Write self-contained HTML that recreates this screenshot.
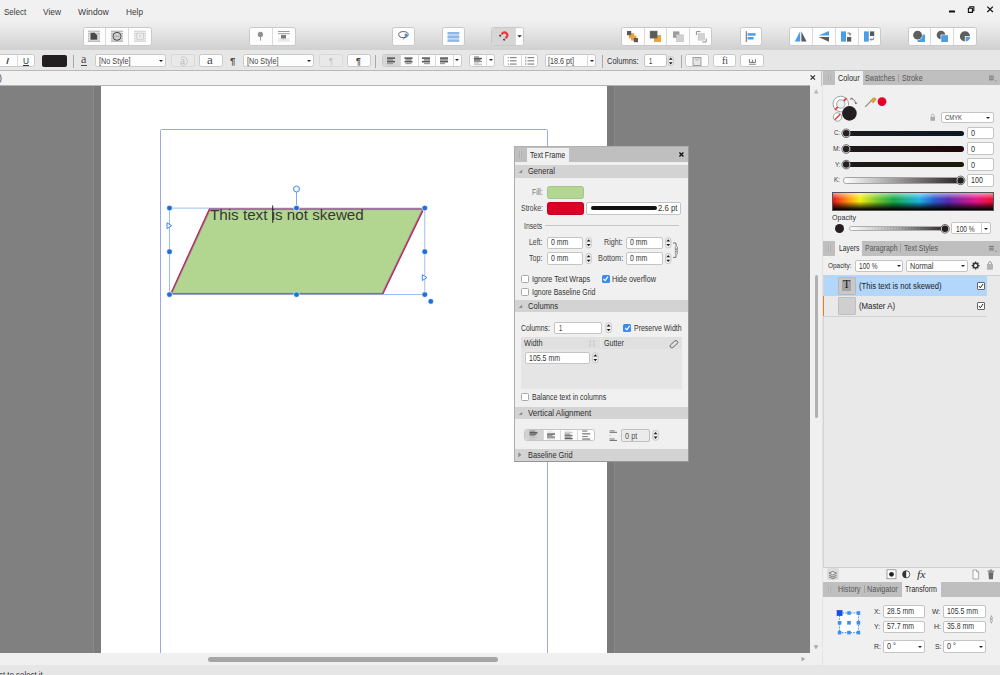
<!DOCTYPE html>
<html><head><meta charset="utf-8">
<style>
*{box-sizing:border-box;margin:0;padding:0}
html,body{width:1000px;height:675px;overflow:hidden;background:#f0f0f0;font-family:"Liberation Sans",sans-serif;font-size:8.5px;color:#3a3a3a}
.a{position:absolute}
.t{position:absolute;white-space:nowrap;line-height:10px;transform-origin:0 0}
.b{position:absolute;background:#fdfdfd;border:1px solid #c9c9c9;border-radius:2.5px}
.b i{position:absolute;top:0;bottom:0;width:1px;background:#dadada}
.p{position:absolute;top:0;bottom:0;background:#d6d6d6}
.i{position:absolute;background:#fff;border:1px solid #c4c4c4;border-radius:2px}
.sp{position:absolute;width:6.4px;background:#f3f3f3;border:1px solid #c8c8c8;border-radius:2.5px}
.sp:before{content:"";position:absolute;left:0.3px;top:1.5px;border:1.9px solid transparent;border-bottom:2.3px solid #1a1a1a;border-top:0}
.sp:after{content:"";position:absolute;left:0.3px;bottom:1.2px;border:1.9px solid transparent;border-top:2.3px solid #1a1a1a;border-bottom:0}
.dd{position:absolute;width:0;height:0;border:2px solid transparent;border-top:2.5px solid #222;border-bottom:0}
.cb{position:absolute;width:8px;height:8px;background:#fff;border:1px solid #a8a8a8;border-radius:1.5px}
.cc{position:absolute;width:8px;height:8px;background:#3b8bef;border-radius:1.5px}
svg{position:absolute;overflow:visible}
</style></head><body>
<div class="a" style="left:0px;top:0px;width:1000px;height:21px;background:#f1f1f1;"></div>
<div class="a" style="left:0px;top:21px;width:1000px;height:28.6px;background:linear-gradient(#f0f0f0,#e4e4e4 40%,#d0d0d0);"></div>
<div class="a" style="left:0px;top:49.6px;width:1000px;height:20.4px;background:#e7e7e7;"></div>
<div class="a" style="left:0px;top:70px;width:1000px;height:1px;background:#b9b9b9;"></div>
<div class="a" style="left:0px;top:71px;width:822px;height:14.5px;background:#f2f2f2;border-right:1px solid #c4c4c4"></div>
<div class="a" style="left:0px;top:85px;width:810px;height:568px;background:#808080;border-top:1px solid #b4b4b4"></div>
<div class="a" style="left:93px;top:86px;width:1px;height:567px;background:#8a8a8a;"></div>
<div class="a" style="left:94px;top:86px;width:7px;height:567px;background:#7b7b7b;"></div>
<div class="a" style="left:607px;top:86px;width:7px;height:567px;background:#7a7a7a;"></div>
<div class="a" style="left:614px;top:86px;width:1px;height:567px;background:#8a8a8a;"></div>
<div class="a" style="left:100.6px;top:86px;width:506.6px;height:567px;background:#fff;"></div>
<div class="a" style="left:160px;top:129px;width:388px;height:540px;border:1px solid #9ca4f4;border-radius:1.5px 1.5px 0 0"></div>
<div class="a" style="left:810px;top:85.5px;width:12px;height:568px;background:#f0f0f0;"></div>
<div class="a" style="left:0px;top:653px;width:822px;height:12px;background:#f0f0f0;"></div>
<div class="a" style="left:208px;top:656.5px;width:290px;height:5px;background:#a6a6a6;border-radius:3px"></div>
<div class="a" style="left:814.5px;top:275px;width:3.5px;height:143px;background:#b0b0b0;border-radius:2px"></div>
<svg style="left:0;top:0" width="1000" height="675"><path d="M813.8 93.5h4.8l-2.4-4.2z" fill="#b8b8b8"/><path d="M813.6 645.3h4.8l-2.4 4.2z" fill="#a8a8a8"/><path d="M801.5 656.8v4.6l3.8-2.3z" fill="#a8a8a8"/></svg>
<div class="a" style="left:0px;top:665px;width:1000px;height:10px;background:#e6e6e6;"></div>
<div class="t" style="left:-1px;top:670.00px;font-size:8.8px;color:#333;transform:scaleX(0.896);">ct to select it.</div>
<div class="t" style="left:3.5px;top:6.96px;font-size:9.2px;color:#3a3a3a;transform:scaleX(0.872);">Select</div>
<div class="t" style="left:42.8px;top:6.96px;font-size:9.2px;color:#3a3a3a;transform:scaleX(0.910);">View</div>
<div class="t" style="left:77.5px;top:6.96px;font-size:9.2px;color:#3a3a3a;transform:scaleX(0.941);">Window</div>
<div class="t" style="left:125.5px;top:6.96px;font-size:9.2px;color:#3a3a3a;transform:scaleX(0.899);">Help</div>
<svg style="left:0;top:0" width="1000" height="22"><rect x="949" y="10.5" width="6" height="2" fill="#111"/><path d="M969.8 8v-1.3h4v4h-1.3M968.4 8.2h4v4.2h-4z" fill="none" stroke="#111" stroke-width="1.1"/><path d="M987.3 6.6l5.6 5.4M992.9 6.6l-5.6 5.4" stroke="#111" stroke-width="1.2"/></svg>
<div class="b" style="left:82.8px;top:27.3px;width:68.8px;height:18.3px"><i style="left:21.60000000000001px"></i><i style="left:44.60000000000001px"></i></div>
<div class="b" style="left:249.4px;top:27.3px;width:46.20000000000002px;height:18.3px"><i style="left:21.99999999999997px"></i></div>
<div class="b" style="left:392.4px;top:27.3px;width:22.80000000000001px;height:18.3px"></div>
<div class="b" style="left:442px;top:27.3px;width:23px;height:18.3px"></div>
<div class="b" style="left:491.2px;top:27.3px;width:33.00000000000006px;height:18.3px"><div class="p" style="left:0;width:22.599999999999966px;border-radius:2px 0 0 2px"></div><i style="left:22.599999999999966px"></i></div>
<div class="b" style="left:620.8px;top:27.3px;width:91.70000000000005px;height:18.3px"><i style="left:21.90000000000009px"></i><i style="left:44.700000000000045px"></i><i style="left:67.70000000000005px"></i></div>
<div class="b" style="left:739.5px;top:27.3px;width:22.899999999999977px;height:18.3px"></div>
<div class="b" style="left:789.4px;top:27.3px;width:91.80000000000007px;height:18.3px"><i style="left:22.100000000000023px"></i><i style="left:45.0px"></i><i style="left:68.0px"></i></div>
<div class="b" style="left:907.8px;top:27.3px;width:69.0px;height:18.3px"><i style="left:21.700000000000045px"></i><i style="left:44.700000000000045px"></i></div>
<svg style="left:0;top:0" width="1000" height="50"><rect x="88" y="30.6" width="12" height="1.8" fill="#bdbdbd"/><rect x="88" y="33.0" width="12" height="1.8" fill="#bdbdbd"/><rect x="88" y="35.4" width="12" height="1.8" fill="#bdbdbd"/><rect x="88" y="37.8" width="12" height="1.8" fill="#bdbdbd"/><rect x="88" y="40.2" width="12" height="1.8" fill="#bdbdbd"/><path d="M90 32.2h4.6l3.2 3v5h-7.8z" fill="#484848" stroke="#f0f0f0" stroke-width=".9"/><rect x="111" y="30.6" width="12" height="1.8" fill="#bdbdbd"/><rect x="111" y="33.0" width="12" height="1.8" fill="#bdbdbd"/><rect x="111" y="35.4" width="12" height="1.8" fill="#bdbdbd"/><rect x="111" y="37.8" width="12" height="1.8" fill="#bdbdbd"/><rect x="111" y="40.2" width="12" height="1.8" fill="#bdbdbd"/><circle cx="117" cy="36.3" r="4" fill="#d0d0d0" stroke="#4a4a4a" stroke-width="1"/><rect x="113.6" y="35.6" width="6.8" height="1.4" fill="#b4b4b4"/><rect x="134" y="30.6" width="12" height="1.8" fill="#dcdcdc"/><rect x="134" y="33.0" width="12" height="1.8" fill="#dcdcdc"/><rect x="134" y="35.4" width="12" height="1.8" fill="#dcdcdc"/><rect x="134" y="37.8" width="12" height="1.8" fill="#dcdcdc"/><rect x="134" y="40.2" width="12" height="1.8" fill="#dcdcdc"/><rect x="137" y="33.2" width="6.4" height="6" fill="#f4f4f4" stroke="#c2c2c2" stroke-width=".7"/><path d="M138.8 34.8l2.8 2.8M141.6 34.8l-2.8 2.8" stroke="#bbb" stroke-width=".7"/><circle cx="260.4" cy="34.4" r="2.6" fill="#909090"/><rect x="260" y="36" width=".9" height="4.6" fill="#909090"/><rect x="278" y="31" width="11.6" height="1" fill="#9a9a9a"/><rect x="278" y="33.2" width="11.6" height="1" fill="#9a9a9a"/><rect x="281" y="35" width="5" height="4.2" fill="#7a7a7a"/><rect x="278" y="38.4" width="11.6" height="1" fill="#dcdcdc"/><rect x="278" y="40.4" width="11.6" height="1" fill="#dcdcdc"/><ellipse cx="403.4" cy="34.6" rx="4.7" ry="3" fill="#fff" stroke="#4a4a4a" stroke-width=".9"/><path d="M405.6 36.2l-2.4 3.2" stroke="#4a4a4a" stroke-width=".8"/><circle cx="406" cy="35" r="1.5" fill="#3d8fe8"/><rect x="447.6" y="32" width="11.6" height="9.8" fill="#c6dbf3"/><rect x="447.6" y="32" width="11.6" height="2.2" fill="#8fb7e6"/><rect x="447.6" y="35.8" width="11.6" height="2.2" fill="#8fb7e6"/><rect x="447.6" y="39.6" width="11.6" height="2.2" fill="#8fb7e6"/><g transform="translate(504.5,35.3) rotate(45)"><path d="M-2.8 1.5V0A2.8 2.8 0 0 1 2.8 0V1.5" fill="none" stroke="#f03238" stroke-width="2"/><rect x="-3.7" y="2.5" width="1.8" height="1.7" fill="#3a3a3a"/><rect x="1.9" y="2.5" width="1.8" height="1.7" fill="#3a3a3a"/></g><path d="M517.4 35.2h4.4l-2.2 2.4z" fill="#222"/><rect x="628.8" y="33.2" width="5.4" height="5.2" fill="#e8a33a"/><rect x="631" y="35.6" width="5.4" height="5" fill="#e8a33a"/><rect x="627" y="31" width="4.2" height="4.2" fill="#5a5a5a"/><rect x="633.8" y="38" width="4.2" height="4.2" fill="#5a5a5a"/><rect x="654" y="35" width="7" height="7" fill="#e8a33a"/><rect x="650" y="31" width="7.2" height="7.2" fill="#5a5a5a" stroke="#888" stroke-width=".5"/><rect x="673" y="31.4" width="6.4" height="6.4" fill="#9c9c9c"/><rect x="676.4" y="34.8" width="7.2" height="7" fill="#d0d0d0" stroke="#c0c0c0" stroke-width=".5"/><rect x="698" y="33.4" width="6.6" height="6.8" fill="#d2d2d2" stroke="#c4c4c4" stroke-width=".5"/><path d="M696.4 35v-3.4h4M706.2 38.6v3.4h-3.8" fill="none" stroke="#8e8e8e" stroke-width="1"/><rect x="745.8" y="31.2" width=".9" height="10.8" fill="#555"/><rect x="747.6" y="33.2" width="8" height="2.5" fill="#4a9ee6"/><rect x="747.6" y="37" width="6" height="2.5" fill="#4a9ee6"/><path d="M794.8 41.6h5.4v-10.4z" fill="#4a9ee6"/><path d="M801.4 41.6h5.2l-5.2-10.2z" fill="#5a5a5a"/><path d="M818.4 35.6h10.6v-4.6z" fill="#4a9ee6"/><path d="M818.4 36.9h10.6v4.8z" fill="#5a5a5a"/><rect x="841" y="31.4" width="5" height="10.2" fill="#4a9ee6"/><rect x="847" y="37" width="4.2" height="4.6" fill="#5a5a5a"/><path d="M847.4 33h2.6v2.6M850 34.6l-1-1.2M850 34.6l1-1.2" fill="none" stroke="#555" stroke-width=".7"/><rect x="864" y="31.4" width="4.8" height="10.2" fill="#4a9ee6"/><rect x="870" y="31.4" width="4.2" height="4.6" fill="#5a5a5a"/><path d="M873.4 37.4v2.2h-3.2M871.2 38.6l-1 1l1 1" fill="none" stroke="#555" stroke-width=".7"/><rect x="917.6" y="34.6" width="7.4" height="7.4" fill="#4a9ee6"/><circle cx="917.6" cy="35.2" r="4.9" fill="#fff"/><circle cx="917.6" cy="35.2" r="4.4" fill="#5e5e5e"/><circle cx="941" cy="35" r="4.3" fill="#5e5e5e"/><rect x="940.6" y="34.6" width="7.8" height="7.8" fill="#fff"/><rect x="941.2" y="35.2" width="6.8" height="6.8" fill="#4a9ee6"/><circle cx="965" cy="36.4" r="5.1" fill="#5e5e5e"/><path d="M964.8 36.2h6v6h-6z" fill="#fff"/><path d="M965.6 37h4.6a5.1 5.1 0 0 1-4.6 4.4z" fill="#4a9ee6"/></svg>
<div class="b" style="left:-6px;top:54px;width:41.3px;height:13.2px;background:#fdfdfd;border-color:#c9c9c9"><i style="left:22px"></i></div>
<div class="t" style="left:6.4px;top:55.55px;font-size:9.5px;color:#222;transform:scaleX(1.137);font-style:italic;">I</div>
<div class="t" style="left:23px;top:55.73px;font-size:9px;color:#333;transform:scaleX(0.923);text-decoration:underline;">U</div>
<div class="a" style="left:42px;top:55px;width:24.8px;height:11.8px;background:#231f20;border-radius:2px"></div>
<div class="a" style="left:73px;top:55px;width:1px;height:12.5px;background:#a8a8a8;"></div>
<div class="t" style="left:81px;top:54.27px;font-size:12px;color:#4a4a4a;transform:scaleX(1.014);font-family:'Liberation Serif',serif;">a</div>
<div class="a" style="left:80.5px;top:65.2px;width:6.5px;height:1px;background:#4a4a4a;"></div>
<div class="b" style="left:94.5px;top:54px;width:71.5px;height:13.2px;background:#fdfdfd;border-color:#c9c9c9"></div>
<div class="t" style="left:98.5px;top:55.97px;font-size:8.3px;color:#444;transform:scaleX(0.876);">[No Style]</div>
<div class="dd" style="left:159px;top:59.8px"></div>
<div class="b" style="left:170.5px;top:54px;width:24.30000000000001px;height:13.2px;background:#e9e9e9;border-color:#d9d9d9"></div>
<div class="t" style="left:180.3px;top:55.60px;font-size:10.5px;color:#bebebe;transform:scaleX(1.073);font-family:'Liberation Serif',serif;">a</div>
<svg style="left:0;top:0" width="400" height="72"><path d="M180.8 57.5a4.3 4.3 0 1 1 -0.6 6.6" fill="none" stroke="#c2c2c2" stroke-width=".8"/><path d="M329 57.5a4.3 4.3 0 1 1 -0.6 6.6" fill="none" stroke="#c2c2c2" stroke-width=".8"/></svg>
<div class="b" style="left:198.5px;top:54px;width:24.0px;height:13.2px;background:#fdfdfd;border-color:#c9c9c9"></div>
<div class="t" style="left:207.4px;top:54.52px;font-size:13px;color:#4a4a4a;transform:scaleX(1.005);font-family:'Liberation Serif',serif;">a</div>
<div class="t" style="left:229.8px;top:55.84px;font-size:9.8px;color:#4a4a4a;transform:scaleX(0.988);font-weight:bold;">¶</div>
<div class="b" style="left:242.5px;top:54px;width:71.30000000000001px;height:13.2px;background:#fdfdfd;border-color:#c9c9c9"></div>
<div class="t" style="left:246.5px;top:55.97px;font-size:8.3px;color:#444;transform:scaleX(0.876);">[No Style]</div>
<div class="dd" style="left:307.3px;top:59.8px"></div>
<div class="b" style="left:318.5px;top:54px;width:24.69999999999999px;height:13.2px;background:#e9e9e9;border-color:#d9d9d9"></div>
<div class="t" style="left:328.6px;top:56.20px;font-size:8.8px;color:#bcbcbc;transform:scaleX(0.846);">¶</div>
<div class="b" style="left:346.5px;top:54px;width:24.0px;height:13.2px;background:#fdfdfd;border-color:#c9c9c9"></div>
<div class="t" style="left:356.2px;top:56.05px;font-size:9.2px;color:#3a3a3a;transform:scaleX(0.931);font-weight:bold;">¶</div>
<div class="a" style="left:375.2px;top:55px;width:1px;height:12.5px;background:#a8a8a8;"></div>
<div class="b" style="left:381.5px;top:54px;width:80.0px;height:13.2px;background:#fdfdfd;border-color:#c9c9c9"><div class="p" style="left:0;width:17.0px;border-radius:2px 0 0 2px"></div><i style="left:17.0px"></i><i style="left:35.0px"></i><i style="left:52.0px"></i><i style="left:70.0px"></i></div>
<div class="dd" style="left:455.3px;top:59.3px"></div>
<div class="b" style="left:468.8px;top:54px;width:26.399999999999977px;height:13.2px;background:#fdfdfd;border-color:#c9c9c9"><i style="left:16.69999999999999px"></i></div>
<div class="dd" style="left:489.3px;top:59.3px"></div>
<div class="b" style="left:503px;top:54px;width:35.200000000000045px;height:13.2px;background:#fdfdfd;border-color:#c9c9c9"><i style="left:16.5px"></i></div>
<div class="b" style="left:544.6px;top:54px;width:51.69999999999993px;height:13.2px;background:#fdfdfd;border-color:#c9c9c9"><i style="left:41.39999999999998px"></i></div>
<div class="t" style="left:548px;top:55.97px;font-size:8.3px;color:#444;transform:scaleX(0.867);">[18.6 pt]</div>
<div class="dd" style="left:589.8px;top:59.8px"></div>
<div class="a" style="left:602.3px;top:55px;width:1px;height:12.5px;background:#a8a8a8;"></div>
<div class="t" style="left:607px;top:55.80px;font-size:8.8px;color:#333;transform:scaleX(0.853);">Columns:</div>
<div class="i" style="left:644.3px;top:54px;width:22.5px;height:13.2px"></div>
<div class="t" style="left:649px;top:55.90px;font-size:8.5px;color:#333;transform:scaleX(0.677);">1</div>
<svg style="left:0;top:0" width="1000" height="675"><rect x="668.10" y="56.50" width="5.30" height="9.00" rx="2.2" fill="#f3f3f3" stroke="#c6c6c6" stroke-width="1"/><path d="M668.85 59.80h3.8l-1.9-2.3z" fill="#1a1a1a"/><path d="M668.85 62.20h3.8l-1.9 2.3z" fill="#1a1a1a"/></svg>
<div class="a" style="left:680.5px;top:55px;width:1px;height:12.5px;background:#a8a8a8;"></div>
<div class="b" style="left:685px;top:54px;width:24.200000000000045px;height:13.2px;background:#fdfdfd;border-color:#c9c9c9"></div>
<div class="b" style="left:712.7px;top:54px;width:23.799999999999955px;height:13.2px;background:#fdfdfd;border-color:#c9c9c9"></div>
<div class="t" style="left:721.8px;top:55.60px;font-size:10.5px;color:#444;transform:scaleX(0.936);font-family:'Liberation Serif',serif;">fi</div>
<div class="b" style="left:740.3px;top:54px;width:24.200000000000045px;height:13.2px;background:#fdfdfd;border-color:#c9c9c9"></div>
<svg style="left:0;top:0" width="1000" height="72"><rect x="387.0" y="57.30" width="8" height="1.65" fill="#5c5c5c"/><rect x="387.0" y="59.05" width="6" height="1.65" fill="#9a9a9a"/><rect x="387.0" y="60.80" width="8" height="1.65" fill="#5c5c5c"/><rect x="387.0" y="62.55" width="6" height="1.65" fill="#9a9a9a"/><rect x="404.5" y="57.30" width="8" height="1.65" fill="#5c5c5c"/><rect x="405.5" y="59.05" width="6" height="1.65" fill="#9a9a9a"/><rect x="404.5" y="60.80" width="8" height="1.65" fill="#5c5c5c"/><rect x="405.5" y="62.55" width="6" height="1.65" fill="#9a9a9a"/><rect x="422.0" y="57.30" width="8" height="1.65" fill="#5c5c5c"/><rect x="424.0" y="59.05" width="6" height="1.65" fill="#9a9a9a"/><rect x="422.0" y="60.80" width="8" height="1.65" fill="#5c5c5c"/><rect x="424.0" y="62.55" width="6" height="1.65" fill="#9a9a9a"/><rect x="440.0" y="57.30" width="8" height="1.65" fill="#5c5c5c"/><rect x="440.0" y="59.05" width="8" height="1.65" fill="#9a9a9a"/><rect x="440.0" y="60.80" width="8" height="1.65" fill="#5c5c5c"/><rect x="440.0" y="62.55" width="5" height="1.65" fill="#9a9a9a"/><rect x="474.0" y="56.30" width="5" height="1.40" fill="#9a9a9a"/><rect x="474.0" y="57.80" width="8" height="1.40" fill="#5c5c5c"/><rect x="474.0" y="59.30" width="6.5" height="1.40" fill="#5c5c5c"/><rect x="474.0" y="60.80" width="8" height="1.40" fill="#9a9a9a"/><rect x="474.0" y="62.30" width="5" height="1.40" fill="#c8c8c8"/><rect x="474.0" y="63.80" width="8" height="1.40" fill="#c8c8c8"/><rect x="510" y="57.2" width="6.6" height="0.9" fill="#666"/><rect x="507.8" y="57.1" width="1.1" height="1.1" fill="#888"/><rect x="527.6" y="57.2" width="6.6" height="0.9" fill="#666"/><rect x="525.4" y="56.400000000000006" width=".8" height="2.2" fill="#888"/><rect x="510" y="60.4" width="6.6" height="0.9" fill="#666"/><rect x="507.8" y="60.3" width="1.1" height="1.1" fill="#888"/><rect x="527.6" y="60.4" width="6.6" height="0.9" fill="#666"/><rect x="525.4" y="59.6" width=".8" height="2.2" fill="#888"/><rect x="510" y="63.6" width="6.6" height="0.9" fill="#666"/><rect x="507.8" y="63.5" width="1.1" height="1.1" fill="#888"/><rect x="527.6" y="63.6" width="6.6" height="0.9" fill="#666"/><rect x="525.4" y="62.800000000000004" width=".8" height="2.2" fill="#888"/><rect x="693" y="57.4" width="8" height="8" fill="#e4e4e4" stroke="#8a8a8a" stroke-width=".8"/><path d="M696 58v2h2.4v-2" fill="none" stroke="#aaa" stroke-width=".6"/><path d="M749.4 59.2v3.2h6v-3.2M752.4 59.8v2.6" fill="none" stroke="#666" stroke-width=".9"/><rect x="749" y="63.8" width="6.8" height=".8" fill="#666"/></svg>
<div class="t" style="left:-1.5px;top:72.50px;font-size:8.5px;color:#444;transform:scaleX(1.060);">)</div>
<svg style="left:0;top:0" width="1000" height="90"><path d="M810.6 75.4l4.4 4.2M815 75.4l-4.4 4.2" stroke="#222" stroke-width="1.1"/></svg>
<div class="a" style="left:822px;top:71px;width:178px;height:594px;background:#f0f0f0;"></div>
<div class="a" style="left:822px;top:71px;width:1px;height:594px;background:#e4e4e4;"></div>
<div class="a" style="left:823.2px;top:70.6px;width:177px;height:14.8px;background:#bfbfbf;"></div>
<div class="a" style="left:827.6px;top:74.8px;width:3px;height:6.5px;background:repeating-linear-gradient(90deg,#b0b0b0 0 1px,#c8c8c8 1px 2px)"></div>
<div class="a" style="left:835px;top:71.4px;width:28px;height:14.2px;background:#f0f0f0;"></div>
<div class="t" style="left:838.2px;top:72.80px;font-size:8.8px;color:#2a2a2a;transform:scaleX(0.833);">Colour</div>
<div class="t" style="left:865.4px;top:72.80px;font-size:8.8px;color:#555;transform:scaleX(0.786);">Swatches</div>
<div class="a" style="left:898.4px;top:74px;width:1px;height:8px;background:#a2a2a2;"></div>
<div class="t" style="left:902px;top:72.80px;font-size:8.8px;color:#555;transform:scaleX(0.810);">Stroke</div>
<svg style="left:0;top:0" width="1000" height="675"><path d="M989 76.2h4.8M989 78h4.8M989 79.8h4.8" stroke="#6e6e6e" stroke-width=".9"/><path d="M995 80.6h2l-1 1.2z" fill="#777"/><path d="M988.6 245.6h5.6M988.6 247.6h5.6M988.6 249.6h5.6" stroke="#777" stroke-width="1"/><path d="M995.2 250.4h2.4l-1.2 1.4z" fill="#777"/></svg>
<svg style="left:0;top:0" width="1000" height="675"><circle cx="840.8" cy="104" r="7.8" fill="#fff" stroke="#8c8c8c" stroke-width=".8"/><path d="M835 109.8l11.6-11.6" stroke="#f23a3a" stroke-width="1.9"/><circle cx="840.8" cy="104" r="4.2" fill="#f0f0f0" stroke="#8c8c8c" stroke-width=".8"/><circle cx="837.5" cy="117" r="4.2" fill="#fff" stroke="#8c8c8c" stroke-width=".8"/><path d="M834.8 119.7l5.4-5.4" stroke="#f23a3a" stroke-width="1.5"/><circle cx="849.4" cy="113.4" r="7.8" fill="#f0f0f0"/><circle cx="849.4" cy="113.4" r="7.3" fill="#231f20"/><path d="M851.4 98.6a6 6 0 0 1 4.6 5" fill="none" stroke="#555" stroke-width=".7"/><path d="M850.6 99.8l.4-1.8l1.8.6M854.8 102.6l1.2 1.4l1-1.6" fill="none" stroke="#555" stroke-width=".7"/><path d="M865.2 106.8l6-6" stroke="#8a8a8a" stroke-width="1.2"/><path d="M870.6 100.6l2.2-2.4a1.8 1.8 0 0 1 2.6 2.6l-2.4 2.2z" fill="#d9a441" stroke="#a87820" stroke-width=".4"/><circle cx="882" cy="101.6" r="4.4" fill="#e4002b"/><rect x="930.4" y="116.8" width="4.6" height="4" fill="#aaa"/><path d="M931.4 116.8v-1.4a1.3 1.3 0 0 1 2.6 0v1.4" fill="none" stroke="#aaa" stroke-width=".8"/></svg>
<div class="i" style="left:941.2px;top:112.4px;width:52.4px;height:10.6px"></div>
<div class="t" style="left:944.6px;top:112.88px;font-size:8px;color:#444;transform:scaleX(0.735);">CMYK</div>
<div class="dd" style="left:986.3px;top:116.6px"></div>
<div class="t" style="left:834.2px;top:128.38px;font-size:8px;color:#3a3a3a;transform:scaleX(0.750);">C:</div>
<div class="a" style="left:843px;top:130.70000000000002px;width:121px;height:5.2px;border-radius:3.2px;background:linear-gradient(90deg,#1c1a1c,#0a1626);"></div>
<svg style="left:0;top:0" width="1000" height="675"><circle cx="846.2" cy="133.3" r="4.3" fill="#f2f2f2" stroke="#3c3c3c" stroke-width=".75"/><circle cx="846.2" cy="133.3" r="3.25" fill="#231f20"/></svg>
<div class="i" style="left:967.3px;top:126.7px;width:26.3px;height:12.8px"></div>
<div class="t" style="left:971.4px;top:128.27px;font-size:8.3px;color:#333;transform:scaleX(0.860);">0</div>
<div class="t" style="left:832.8000000000001px;top:144.08px;font-size:8px;color:#3a3a3a;transform:scaleX(0.833);">M:</div>
<div class="a" style="left:843px;top:146.4px;width:121px;height:5.2px;border-radius:3.2px;background:linear-gradient(90deg,#1c1a1c,#1f0409);"></div>
<svg style="left:0;top:0" width="1000" height="675"><circle cx="846.2" cy="149" r="4.3" fill="#f2f2f2" stroke="#3c3c3c" stroke-width=".75"/><circle cx="846.2" cy="149" r="3.25" fill="#231f20"/></svg>
<div class="i" style="left:967.3px;top:142.4px;width:26.3px;height:12.8px"></div>
<div class="t" style="left:971.4px;top:143.97px;font-size:8.3px;color:#333;transform:scaleX(0.860);">0</div>
<div class="t" style="left:834.6px;top:159.68px;font-size:8px;color:#3a3a3a;transform:scaleX(0.787);">Y:</div>
<div class="a" style="left:843px;top:162.0px;width:121px;height:5.2px;border-radius:3.2px;background:linear-gradient(90deg,#1c1a1c,#1c1a06);"></div>
<svg style="left:0;top:0" width="1000" height="675"><circle cx="846.2" cy="164.6" r="4.3" fill="#f2f2f2" stroke="#3c3c3c" stroke-width=".75"/><circle cx="846.2" cy="164.6" r="3.25" fill="#231f20"/></svg>
<div class="i" style="left:967.3px;top:158.1px;width:26.3px;height:12.8px"></div>
<div class="t" style="left:971.4px;top:159.57px;font-size:8.3px;color:#333;transform:scaleX(0.860);">0</div>
<div class="t" style="left:834.4000000000001px;top:175.48px;font-size:8px;color:#3a3a3a;transform:scaleX(0.767);">K:</div>
<div class="a" style="left:843px;top:177.20000000000002px;width:121px;height:6.4px;border-radius:3.2px;background:linear-gradient(90deg,#fefefe,#231f20);border:.8px solid #a4a4a4;"></div>
<svg style="left:0;top:0" width="1000" height="675"><circle cx="960.6" cy="180.4" r="4.3" fill="#f2f2f2" stroke="#3c3c3c" stroke-width=".75"/><circle cx="960.6" cy="180.4" r="3.25" fill="#231f20"/></svg>
<div class="i" style="left:967.3px;top:173.8px;width:26.3px;height:12.8px"></div>
<div class="t" style="left:971.4px;top:175.37px;font-size:8.3px;color:#333;transform:scaleX(0.860);">100</div>
<div class="a" style="left:832px;top:191.6px;width:162px;height:19.4px;border:1px solid #555;background:linear-gradient(rgba(255,255,255,.55),rgba(255,255,255,0) 35%,rgba(0,0,0,0) 50%,rgba(0,0,0,.95) 96%),linear-gradient(90deg,#e8141c 0%,#ff9c10 10%,#f4ee12 17%,#7cc82a 27%,#18a848 38%,#18b49c 47%,#22b0e8 54%,#2a5cd0 63%,#5a2ab0 72%,#b01c98 82%,#e81484 90%,#e8142c 100%)"></div>
<div class="t" style="left:832px;top:212.68px;font-size:8px;color:#333;transform:scaleX(0.885);">Opacity</div>
<div class="a" style="left:835.4px;top:224.2px;width:9px;height:9px;border-radius:50%;background:#231f20"></div>
<div class="a" style="left:849.2px;top:226.2px;width:99.6px;height:5.2px;border-radius:3px;border:.6px solid #b0b0b0;background:linear-gradient(90deg,rgba(255,255,255,.95),rgba(140,140,140,.7) 50%,rgba(35,31,32,1)),repeating-conic-gradient(#bbb 0 25%,#fff 0 50%) 0 0/3px 3px"></div>
<svg style="left:0;top:0" width="1000" height="675"><circle cx="945" cy="228.8" r="4.3" fill="#f2f2f2" stroke="#3c3c3c" stroke-width=".75"/><circle cx="945" cy="228.8" r="3.25" fill="#231f20"/></svg>
<div class="i" style="left:951.3px;top:222.3px;width:39.6px;height:12.2px"></div>
<div class="a" style="left:980.6px;top:223.3px;width:1px;height:10.2px;background:#d4d4d4;"></div>
<div class="t" style="left:955.6px;top:223.57px;font-size:8.3px;color:#333;transform:scaleX(0.790);">100 %</div>
<div class="dd" style="left:983.8px;top:227.60000000000002px"></div>
<div class="a" style="left:823.2px;top:240.8px;width:177px;height:15px;background:#bfbfbf;"></div>
<div class="a" style="left:827.6px;top:245px;width:3px;height:6.5px;background:repeating-linear-gradient(90deg,#b0b0b0 0 1px,#c8c8c8 1px 2px)"></div>
<div class="a" style="left:835.3px;top:241.4px;width:26.4px;height:14.4px;background:#f0f0f0;"></div>
<div class="t" style="left:838.6px;top:243.00px;font-size:8.8px;color:#2a2a2a;transform:scaleX(0.772);">Layers</div>
<div class="t" style="left:864.6px;top:243.00px;font-size:8.8px;color:#555;transform:scaleX(0.793);">Paragraph</div>
<div class="a" style="left:900px;top:244.2px;width:1px;height:8px;background:#a2a2a2;"></div>
<div class="t" style="left:903.6px;top:243.00px;font-size:8.8px;color:#555;transform:scaleX(0.799);">Text Styles</div>
<div class="t" style="left:828px;top:261.14px;font-size:7.8px;color:#333;transform:scaleX(0.825);">Opacity:</div>
<div class="i" style="left:854.8px;top:259.6px;width:48.6px;height:12px"></div>
<div class="t" style="left:858.6px;top:260.57px;font-size:8.3px;color:#333;transform:scaleX(0.790);">100 %</div>
<div class="dd" style="left:896.6px;top:264.6px"></div>
<div class="i" style="left:906.4px;top:259.6px;width:61.8px;height:12px"></div>
<div class="t" style="left:910px;top:260.77px;font-size:8.3px;color:#333;transform:scaleX(0.875);">Normal</div>
<div class="dd" style="left:961px;top:264.6px"></div>
<svg style="left:0;top:0" width="1000" height="675"><circle cx="975.6" cy="265.6" r="2.3" fill="none" stroke="#333" stroke-width="1.5"/><g stroke="#333" stroke-width="1.3"><path d="M975.6 261.6v1.4M975.6 268.2v1.4M971.6 265.6h1.4M978.2 265.6h1.4M972.8 262.8l1 1M977.4 267.4l1 1M978.4 262.8l-1 1M973.8 267.4l-1 1"/></g><rect x="987.4" y="264.6" width="5.2" height="4.6" fill="#b4b4b4" stroke="#9a9a9a" stroke-width=".5"/><path d="M988.6 264.6v-1.6a1.4 1.4 0 0 1 2.8 0v1.6" fill="none" stroke="#9a9a9a" stroke-width=".9"/></svg>
<div class="a" style="left:823.4px;top:275.2px;width:176.6px;height:291.4px;background:#e9e9e9;border-top:1px solid #d0d0d0;border-left:1px solid #d4d4d4"></div>
<div class="a" style="left:824px;top:275.6px;width:163.4px;height:20.3px;background:#b3d6fb;"></div>
<div class="a" style="left:837.5px;top:277px;width:18px;height:17.8px;background:#c9c9c9;border:1px solid #b8b8b8;border-radius:1px"></div>
<div class="a" style="left:842px;top:280.2px;width:9.2px;height:10.6px;background:#a4a4a4;"></div>
<div class="t" style="left:842.8px;top:278.90px;font-size:12.5px;color:#1a1a1a;transform:scaleX(0.943);font-family:'Liberation Serif',serif;">T</div>
<div class="t" style="left:858.6px;top:280.70px;font-size:8.5px;color:#222;transform:scaleX(0.901);">(This text is not skewed)</div>
<div class="a" style="left:837.5px;top:297.4px;width:18px;height:17.2px;background:#cfcfcf;border:1px solid #c0c0c0;border-radius:1px"></div>
<div class="t" style="left:858.6px;top:300.90px;font-size:8.5px;color:#222;transform:scaleX(0.918);">(Master A)</div>
<div class="a" style="left:823.3px;top:296px;width:1.2px;height:19.8px;background:#f07a1a;"></div>
<div class="a" style="left:824px;top:315.8px;width:163.4px;height:1px;background:#d2d2d2;"></div>
<div class="a" style="left:977.2px;top:282.2px;width:7.6px;height:7.6px;background:#fff;border:1px solid #666;border-radius:1px"></div>
<svg style="left:0;top:0" width="1000" height="675"><path d="M978.8 286.0l1.6 1.8l2.6-3.8" fill="none" stroke="#222" stroke-width="1"/></svg>
<div class="a" style="left:977.2px;top:302.2px;width:7.6px;height:7.6px;background:#fff;border:1px solid #666;border-radius:1px"></div>
<svg style="left:0;top:0" width="1000" height="675"><path d="M978.8 306.0l1.6 1.8l2.6-3.8" fill="none" stroke="#222" stroke-width="1"/></svg>
<div class="a" style="left:823.4px;top:566.6px;width:176.6px;height:15.2px;background:#f0f0f0;border-top:1px solid #cfcfcf"></div>
<div class="a" style="left:826.6px;top:568.4px;width:12.4px;height:11.8px;background:#dcdcdc;border-radius:2px"></div>
<svg style="left:0;top:0" width="1000" height="675"><path d="M829 573.2l3.8-1.7l3.8 1.7l-3.8 1.7z" fill="#f4f4f4" stroke="#555" stroke-width=".7"/><path d="M829 575.2l3.8 1.7l3.8-1.7M829 577l3.8 1.7l3.8-1.7" fill="none" stroke="#555" stroke-width=".7"/><rect x="887" y="569.8" width="9" height="9" fill="#fff" stroke="#777" stroke-width=".7"/><circle cx="891.5" cy="574.3" r="2.4" fill="#222"/><circle cx="906.2" cy="574.3" r="3.6" fill="#fff" stroke="#333" stroke-width=".8"/><path d="M906.2 570.7a3.6 3.6 0 0 0 0 7.2z" fill="#333"/><path d="M973 570h3.6l2 2v7h-5.6z" fill="#fafafa" stroke="#8a8a8a" stroke-width=".7"/><path d="M976.6 570v2h2" fill="none" stroke="#8a8a8a" stroke-width=".6"/><path d="M988.4 572.2h5l-.5 7h-4z" fill="#6a6a6a"/><rect x="987.6" y="570.6" width="6.6" height="1.1" fill="#6a6a6a"/><rect x="989.8" y="569.6" width="2.2" height="1" fill="#6a6a6a"/></svg>
<div class="t" style="left:916.6px;top:569.84px;font-size:9.8px;color:#333;transform:scaleX(1.216);font-family:'Liberation Serif',serif;font-style:italic;">fx</div>
<div class="a" style="left:823.2px;top:581.8px;width:177px;height:15.2px;background:#bfbfbf;"></div>
<div class="a" style="left:827.6px;top:586.2px;width:3px;height:6.5px;background:repeating-linear-gradient(90deg,#b0b0b0 0 1px,#c8c8c8 1px 2px)"></div>
<div class="t" style="left:838px;top:584.39px;font-size:8.8px;color:#555;transform:scaleX(0.818);">History</div>
<div class="a" style="left:863.6px;top:585.4px;width:1px;height:8px;background:#a2a2a2;"></div>
<div class="t" style="left:867.4px;top:584.39px;font-size:8.8px;color:#555;transform:scaleX(0.813);">Navigator</div>
<div class="a" style="left:902px;top:582.4px;width:38.8px;height:14.6px;background:#f0f0f0;"></div>
<div class="t" style="left:905.2px;top:584.39px;font-size:8.8px;color:#2a2a2a;transform:scaleX(0.805);">Transform</div>
<svg style="left:0;top:0" width="1000" height="675"><rect x="839.6" y="613" width="18.8" height="19.6" fill="#fff" stroke="#3d8fe8" stroke-width="1" stroke-dasharray="1.6 1.2"/><rect x="836.7" y="610.1" width="5.8" height="5.8" fill="#1a4ee8"/><rect x="837.8000000000001" y="621.0" width="3.6" height="3.6" fill="#3d8fe8"/><rect x="837.8000000000001" y="630.8000000000001" width="3.6" height="3.6" fill="#3d8fe8"/><rect x="847.2" y="611.2" width="3.6" height="3.6" fill="#3d8fe8"/><rect x="847.2" y="621.0" width="3.6" height="3.6" fill="#3d8fe8"/><rect x="847.2" y="630.8000000000001" width="3.6" height="3.6" fill="#3d8fe8"/><rect x="856.6" y="611.2" width="3.6" height="3.6" fill="#3d8fe8"/><rect x="856.6" y="621.0" width="3.6" height="3.6" fill="#3d8fe8"/><rect x="856.6" y="630.8000000000001" width="3.6" height="3.6" fill="#3d8fe8"/><path d="M991.4 615.4v1.2M991.4 622v1.4" stroke="#888" stroke-width=".7"/><ellipse cx="991.4" cy="618" rx="1" ry="1.5" fill="none" stroke="#888" stroke-width=".6"/><ellipse cx="991.4" cy="620.6" rx="1" ry="1.5" fill="none" stroke="#888" stroke-width=".6"/></svg>
<div class="t" style="left:874px;top:606.57px;font-size:8px;color:#2e2e2e;transform:scaleX(0.860);">X:</div>
<div class="i" style="left:883.3px;top:605.4px;width:42px;height:12.2px"></div>
<div class="t" style="left:886.9px;top:606.61px;font-size:8.2px;color:#333;transform:scaleX(0.846);">28.5 mm</div>
<div class="t" style="left:932.4px;top:606.57px;font-size:8px;color:#2e2e2e;transform:scaleX(0.860);">W:</div>
<div class="i" style="left:943.3px;top:605.4px;width:42.8px;height:12.2px"></div>
<div class="t" style="left:946.9px;top:606.61px;font-size:8.2px;color:#333;transform:scaleX(0.850);">105.5 mm</div>
<div class="t" style="left:874px;top:622.17px;font-size:8px;color:#2e2e2e;transform:scaleX(0.860);">Y:</div>
<div class="i" style="left:883.3px;top:621.0px;width:42px;height:12.2px"></div>
<div class="t" style="left:886.9px;top:622.21px;font-size:8.2px;color:#333;transform:scaleX(0.846);">57.7 mm</div>
<div class="t" style="left:934.4px;top:622.17px;font-size:8px;color:#2e2e2e;transform:scaleX(0.860);">H:</div>
<div class="i" style="left:943.3px;top:621.0px;width:42.8px;height:12.2px"></div>
<div class="t" style="left:946.9px;top:622.21px;font-size:8.2px;color:#333;transform:scaleX(0.846);">35.8 mm</div>
<div class="t" style="left:874px;top:641.77px;font-size:8px;color:#2e2e2e;transform:scaleX(0.860);">R:</div>
<div class="i" style="left:883.3px;top:640.1px;width:42px;height:13.2px"></div>
<div class="t" style="left:886.9px;top:641.81px;font-size:8.2px;color:#333;transform:scaleX(0.890);">0 °</div>
<div class="dd" style="left:918.3px;top:645.7px"></div>
<div class="t" style="left:935px;top:641.77px;font-size:8px;color:#2e2e2e;transform:scaleX(0.860);">S:</div>
<div class="i" style="left:943.3px;top:640.1px;width:42.8px;height:13.2px"></div>
<div class="t" style="left:946.9px;top:641.81px;font-size:8.2px;color:#333;transform:scaleX(0.890);">0 °</div>
<div class="dd" style="left:979.0999999999999px;top:645.7px"></div>
<svg style="left:0;top:0" width="1000" height="675"><path d="M989 246.4h4.8M989 248.2h4.8M989 250h4.8" stroke="#6e6e6e" stroke-width=".9"/><path d="M995 250.8h2l-1 1.2z" fill="#777"/></svg>
<svg style="left:0;top:0" width="1000" height="675"><path d="M209.6 208.6H423.8L382.6 294.2H170.6z" fill="#b2d690" stroke="#c8204c" stroke-width="1.35" stroke-linejoin="miter"/><path d="M210.4 209.6H422.2L382 293.4H171.8z" fill="none" stroke="#5a4ab0" stroke-width=".6" opacity=".8"/><rect x="169.5" y="208.1" width="255.3" height="86.5" fill="none" stroke="#8db8f2" stroke-width=".9"/><path d="M296.5 208v-16" stroke="#6aa2ee" stroke-width=".9"/><circle cx="296.5" cy="189" r="3" fill="#eef4ff" stroke="#4a90e2" stroke-width="1"/><circle cx="169.5" cy="208.1" r="3.1" fill="#d6e4fa"/><circle cx="169.5" cy="208.1" r="2.45" fill="#1f6fd6"/><circle cx="296.5" cy="208.1" r="3.1" fill="#d6e4fa"/><circle cx="296.5" cy="208.1" r="2.45" fill="#1f6fd6"/><circle cx="424.8" cy="208.1" r="3.1" fill="#d6e4fa"/><circle cx="424.8" cy="208.1" r="2.45" fill="#1f6fd6"/><circle cx="169.5" cy="251.8" r="3.1" fill="#d6e4fa"/><circle cx="169.5" cy="251.8" r="2.45" fill="#1f6fd6"/><circle cx="424.8" cy="251.8" r="3.1" fill="#d6e4fa"/><circle cx="424.8" cy="251.8" r="2.45" fill="#1f6fd6"/><circle cx="169.5" cy="294.6" r="3.1" fill="#d6e4fa"/><circle cx="169.5" cy="294.6" r="2.45" fill="#1f6fd6"/><circle cx="296.5" cy="294.6" r="3.1" fill="#d6e4fa"/><circle cx="296.5" cy="294.6" r="2.45" fill="#1f6fd6"/><circle cx="424.8" cy="294.6" r="3.1" fill="#d6e4fa"/><circle cx="424.8" cy="294.6" r="2.45" fill="#1f6fd6"/><circle cx="430.8" cy="301.4" r="2.9" fill="#cfe0fa"/><circle cx="430.8" cy="301.4" r="2.3" fill="#1f6fd6"/><path d="M167 222.8v5.8l4.7-2.9z" fill="#fff" stroke="#4088e0" stroke-width="1"/><path d="M422.3 274.7v5.8l4.7-2.9z" fill="#fff" stroke="#4088e0" stroke-width="1"/><rect x="272.2" y="205.4" width="1" height="17.4" fill="#222"/></svg>
<div class="t" style="left:210px;top:205.6px;font-size:15.2px;line-height:18px;color:#383838;transform:scaleX(1.0010)">This text is not skewed</div>
<div class="a" style="left:513.6px;top:145.6px;width:175.6px;height:316.6px;background:#f0f0f0;border:1.3px solid;border-color:#b0b0b0 #979797 #979797 #adadad"></div>
<div class="a" style="left:515px;top:147px;width:172.6px;height:15.2px;background:#bfbfbf;"></div>
<div class="a" style="left:519.4px;top:151.2px;width:3px;height:6.5px;background:repeating-linear-gradient(90deg,#b0b0b0 0 1px,#c8c8c8 1px 2px)"></div>
<div class="a" style="left:527px;top:147.6px;width:42px;height:14.8px;background:#f0f0f0;"></div>
<div class="t" style="left:530px;top:149.87px;font-size:8.6px;color:#2a2a2a;transform:scaleX(0.819);">Text Frame</div>
<svg style="left:0;top:0" width="1000" height="675"><path d="M679.4 152.6l4 3.8M683.4 152.6l-4 3.8" stroke="#111" stroke-width="1.4"/></svg>
<div class="a" style="left:515px;top:164.6px;width:172.6px;height:13px;background:#d3d3d3;"></div>
<div class="t" style="left:528.3px;top:165.92px;font-size:9px;color:#2e2e2e;transform:scaleX(0.837);">General</div>
<svg style="left:0;top:0" width="1000" height="675"><path d="M522.2 169.5v3.4h-3.4z" fill="#8a8a8a"/></svg>
<div class="t" style="left:532.4px;top:187.81px;font-size:8.2px;color:#707070;transform:scaleX(0.831);">Fill:</div>
<div class="a" style="left:546.8px;top:186.4px;width:37px;height:12.6px;background:#b3d693;border:1px solid #a4c686;border-radius:2.5px"></div>
<div class="t" style="left:520.8px;top:203.37px;font-size:8.3px;color:#444;transform:scaleX(0.837);">Stroke:</div>
<div class="a" style="left:546.8px;top:202px;width:37px;height:12.6px;background:#de0024;border:1px solid #c4001e;border-radius:2.5px"></div>
<div class="i" style="left:586.2px;top:202px;width:95px;height:12.6px"></div>
<div class="a" style="left:590.6px;top:206.4px;width:66px;height:3.6px;background:#111;border-radius:2px"></div>
<div class="t" style="left:658.3px;top:203.27px;font-size:8.6px;color:#333;transform:scaleX(0.902);">2.6 pt</div>
<div class="t" style="left:523.7px;top:221.17px;font-size:8.3px;color:#444;transform:scaleX(0.822);">Insets</div>
<div class="a" style="left:545.3px;top:225.2px;width:134px;height:1px;background:#c6c6c6;"></div>
<div class="t" style="left:529.3px;top:237.91px;font-size:8.2px;color:#444;transform:scaleX(0.840);">Left:</div>
<div class="i" style="left:546.7px;top:236.70000000000002px;width:36.6px;height:12.4px"></div>
<div class="t" style="left:550.7px;top:238.00px;font-size:8.2px;color:#333;transform:scaleX(0.849);">0 mm</div>
<svg style="left:0;top:0" width="1000" height="675"><rect x="586.00" y="237.80" width="5.30" height="10.00" rx="2.2" fill="#f3f3f3" stroke="#c6c6c6" stroke-width="1"/><path d="M586.75 241.60h3.8l-1.9-2.3z" fill="#1a1a1a"/><path d="M586.75 244.00h3.8l-1.9 2.3z" fill="#1a1a1a"/></svg>
<div class="t" style="left:604.3px;top:237.91px;font-size:8.2px;color:#444;transform:scaleX(0.873);">Right:</div>
<div class="i" style="left:626.3px;top:236.70000000000002px;width:36.6px;height:12.4px"></div>
<div class="t" style="left:630.3px;top:238.00px;font-size:8.2px;color:#333;transform:scaleX(0.849);">0 mm</div>
<svg style="left:0;top:0" width="1000" height="675"><rect x="665.60" y="237.80" width="5.30" height="10.00" rx="2.2" fill="#f3f3f3" stroke="#c6c6c6" stroke-width="1"/><path d="M666.35 241.60h3.8l-1.9-2.3z" fill="#1a1a1a"/><path d="M666.35 244.00h3.8l-1.9 2.3z" fill="#1a1a1a"/></svg>
<div class="t" style="left:529.3px;top:253.61px;font-size:8.2px;color:#444;transform:scaleX(0.865);">Top:</div>
<div class="i" style="left:546.7px;top:252.40000000000003px;width:36.6px;height:12.4px"></div>
<div class="t" style="left:550.7px;top:253.71px;font-size:8.2px;color:#333;transform:scaleX(0.849);">0 mm</div>
<svg style="left:0;top:0" width="1000" height="675"><rect x="586.00" y="253.50" width="5.30" height="10.00" rx="2.2" fill="#f3f3f3" stroke="#c6c6c6" stroke-width="1"/><path d="M586.75 257.30h3.8l-1.9-2.3z" fill="#1a1a1a"/><path d="M586.75 259.70h3.8l-1.9 2.3z" fill="#1a1a1a"/></svg>
<div class="t" style="left:597.7px;top:253.61px;font-size:8.2px;color:#444;transform:scaleX(0.895);">Bottom:</div>
<div class="i" style="left:626.3px;top:252.40000000000003px;width:36.6px;height:12.4px"></div>
<div class="t" style="left:630.3px;top:253.71px;font-size:8.2px;color:#333;transform:scaleX(0.849);">0 mm</div>
<svg style="left:0;top:0" width="1000" height="675"><rect x="665.60" y="253.50" width="5.30" height="10.00" rx="2.2" fill="#f3f3f3" stroke="#c6c6c6" stroke-width="1"/><path d="M666.35 257.30h3.8l-1.9-2.3z" fill="#1a1a1a"/><path d="M666.35 259.70h3.8l-1.9 2.3z" fill="#1a1a1a"/></svg>
<svg style="left:0;top:0" width="1000" height="675"><path d="M673 243h3v3M673 257.4h3v-3" fill="none" stroke="#555" stroke-width=".8"/><ellipse cx="676.4" cy="248" rx="1.2" ry="1.7" fill="none" stroke="#666" stroke-width=".6"/><ellipse cx="676.4" cy="250.4" rx="1.2" ry="1.7" fill="none" stroke="#666" stroke-width=".6"/><ellipse cx="676.4" cy="252.8" rx="1.2" ry="1.7" fill="none" stroke="#666" stroke-width=".6"/></svg>
<div class="cb" style="left:521.2px;top:274.8px"></div>
<div class="t" style="left:531.7px;top:273.77px;font-size:8.3px;color:#333;transform:scaleX(0.865);">Ignore Text Wraps</div>
<div class="cc" style="left:601.6px;top:274.6px"></div><svg style="left:0;top:0" width="1000" height="675"><path d="M603.4 278.8l1.7 1.8l2.8-4" fill="none" stroke="#fff" stroke-width="1.2"/></svg>
<div class="t" style="left:612px;top:273.77px;font-size:8.3px;color:#333;transform:scaleX(0.875);">Hide overflow</div>
<div class="cb" style="left:521.2px;top:288.2px"></div>
<div class="t" style="left:531.7px;top:287.37px;font-size:8.3px;color:#333;transform:scaleX(0.838);">Ignore Baseline Grid</div>
<div class="a" style="left:515px;top:300px;width:172.6px;height:12.4px;background:#d3d3d3;"></div>
<div class="t" style="left:528.3px;top:301.02px;font-size:9px;color:#2e2e2e;transform:scaleX(0.845);">Columns</div>
<svg style="left:0;top:0" width="1000" height="675"><path d="M522.2 304.59999999999997v3.4h-3.4z" fill="#8a8a8a"/></svg>
<div class="t" style="left:521.3px;top:322.97px;font-size:8.3px;color:#333;transform:scaleX(0.822);">Columns:</div>
<div class="i" style="left:554.4px;top:321.6px;width:48px;height:12.4px"></div>
<div class="t" style="left:559px;top:322.97px;font-size:8.3px;color:#333;transform:scaleX(0.693);">1</div>
<svg style="left:0;top:0" width="1000" height="675"><rect x="606.00" y="322.90" width="5.30" height="9.80" rx="2.2" fill="#f3f3f3" stroke="#c6c6c6" stroke-width="1"/><path d="M606.75 326.60h3.8l-1.9-2.3z" fill="#1a1a1a"/><path d="M606.75 329.00h3.8l-1.9 2.3z" fill="#1a1a1a"/></svg>
<div class="cc" style="left:623.4px;top:323.8px"></div><svg style="left:0;top:0" width="1000" height="675"><path d="M625.1999999999999 328.0l1.7 1.8l2.8-4" fill="none" stroke="#fff" stroke-width="1.2"/></svg>
<div class="t" style="left:634px;top:322.97px;font-size:8.3px;color:#333;transform:scaleX(0.839);">Preserve Width</div>
<div class="a" style="left:521.3px;top:337.4px;width:160.4px;height:51.4px;background:#e5e5e5;"></div>
<div class="a" style="left:521.3px;top:337.4px;width:79px;height:12px;background:#e0e0e0;"></div>
<div class="a" style="left:601.6px;top:337.4px;width:80.1px;height:12px;background:#e0e0e0;"></div>
<div class="t" style="left:523.7px;top:338.37px;font-size:8.3px;color:#333;transform:scaleX(0.881);">Width</div>
<div class="t" style="left:604.3px;top:338.37px;font-size:8.3px;color:#333;transform:scaleX(0.859);">Gutter</div>
<svg style="left:0;top:0" width="1000" height="675"><path d="M590.2 340.6v5.6M593.8 340.6v5.6M589.6 340.8h1.4M593.2 340.8h1.4M589.6 346h1.4M593.2 346h1.4" stroke="#b8b8b8" stroke-width=".6" fill="none"/><rect x="669.4" y="342.4" width="9" height="3.6" rx="1.8" fill="none" stroke="#555" stroke-width=".8" transform="rotate(-42 673.9 344.2)"/></svg>
<div class="i" style="left:525.3px;top:351.6px;width:64.4px;height:12.6px"></div>
<div class="t" style="left:529px;top:352.97px;font-size:8.3px;color:#333;transform:scaleX(0.840);">105.5 mm</div>
<svg style="left:0;top:0" width="1000" height="675"><rect x="592.70" y="352.90" width="5.30" height="9.80" rx="2.2" fill="#f3f3f3" stroke="#c6c6c6" stroke-width="1"/><path d="M593.45 356.60h3.8l-1.9-2.3z" fill="#1a1a1a"/><path d="M593.45 359.00h3.8l-1.9 2.3z" fill="#1a1a1a"/></svg>
<div class="cb" style="left:521.2px;top:393px"></div>
<div class="t" style="left:531.7px;top:392.17px;font-size:8.3px;color:#333;transform:scaleX(0.848);">Balance text in columns</div>
<div class="a" style="left:515px;top:407.2px;width:172.6px;height:12.2px;background:#d3d3d3;"></div>
<div class="t" style="left:528.3px;top:408.12px;font-size:9px;color:#2e2e2e;transform:scaleX(0.883);">Vertical Alignment</div>
<svg style="left:0;top:0" width="1000" height="675"><path d="M522.2 411.7v3.4h-3.4z" fill="#8a8a8a"/></svg>
<div class="b" style="left:524px;top:428.6px;width:71.4px;height:12.8px;border-color:#c6c6c6"><div class="p" style="left:0;width:18px;border-radius:2px 0 0 2px;background:#d2d2d2"></div><i style="left:17.8px"></i><i style="left:35px"></i><i style="left:52.4px"></i></div>
<svg style="left:0;top:0" width="1000" height="675"><rect x="529.5" y="430.40" width="5.6" height="1.4" fill="#9a9a9a"/><rect x="529.5" y="431.90" width="8" height="1.4" fill="#5e5e5e"/><rect x="529.5" y="433.40" width="7" height="1.4" fill="#5e5e5e"/><rect x="529.5" y="434.90" width="5.6" height="1.4" fill="#9a9a9a"/><rect x="529.5" y="436.80" width="8" height="1.4" fill="#c4c4c4"/><rect x="529.5" y="438.40" width="5.6" height="1.4" fill="#c8c8c8"/><rect x="547.0" y="430.40" width="5.6" height="1.4" fill="#e9e9e9"/><rect x="547.0" y="431.90" width="8" height="1.4" fill="#e9e9e9"/><rect x="547.0" y="433.40" width="8" height="1.4" fill="#5e5e5e"/><rect x="547.0" y="434.90" width="5.6" height="1.4" fill="#9a9a9a"/><rect x="547.0" y="436.40" width="8" height="1.4" fill="#777"/><rect x="547.0" y="437.90" width="8" height="1.4" fill="#cfcfcf"/><rect x="564.6" y="430.40" width="5.6" height="1.4" fill="#e9e9e9"/><rect x="564.6" y="431.90" width="8" height="1.4" fill="#cfcfcf"/><rect x="564.6" y="433.40" width="5.6" height="1.4" fill="#9a9a9a"/><rect x="564.6" y="434.90" width="8" height="1.4" fill="#777"/><rect x="564.6" y="436.40" width="6.6" height="1.4" fill="#9a9a9a"/><rect x="564.6" y="437.90" width="8" height="1.4" fill="#5e5e5e"/><rect x="582.2" y="430.50" width="5.2" height="1.1" fill="#777"/><rect x="582.2" y="433.30" width="8" height="1.1" fill="#666"/><rect x="582.2" y="436.00" width="5.6" height="1.1" fill="#888"/><rect x="582.2" y="438.50" width="8" height="1.1" fill="#666"/><rect x="609.6" y="430.30" width="5" height="1.1" fill="#8a8a8a"/><rect x="609.6" y="431.80" width="7.4" height="1.1" fill="#777"/><rect x="609.6" y="438.40" width="5" height="1.1" fill="#8a8a8a"/><rect x="609.6" y="439.90" width="7.4" height="1.1" fill="#777"/><rect x="609.6" y="434.80" width="0.9" height="1.1" fill="#aaa"/></svg>
<div class="i" style="left:621.4px;top:429.2px;width:29px;height:12.8px;background:#ebebeb;border-color:#c0c0c0"></div>
<div class="t" style="left:625.4px;top:430.57px;font-size:8.3px;color:#555;transform:scaleX(0.889);">0 pt</div>
<svg style="left:0;top:0" width="1000" height="675"><rect x="652.90" y="430.50" width="5.30" height="9.80" rx="2.2" fill="#f3f3f3" stroke="#c6c6c6" stroke-width="1"/><path d="M653.65 434.20h3.8l-1.9-2.3z" fill="#1a1a1a"/><path d="M653.65 436.60h3.8l-1.9 2.3z" fill="#1a1a1a"/></svg>
<div class="a" style="left:515px;top:448.6px;width:172.6px;height:12.4px;background:#d3d3d3;"></div>
<div class="t" style="left:528.3px;top:449.62px;font-size:9px;color:#2e2e2e;transform:scaleX(0.826);">Baseline Grid</div>
<svg style="left:0;top:0" width="1000" height="675"><path d="M518.4 452.2v5.2l3-2.6z" fill="#8a8a8a"/></svg>
</body></html>
